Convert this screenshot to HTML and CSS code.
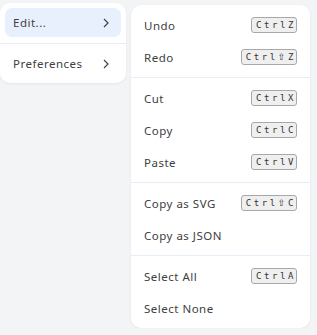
FILE: index.html
```html
<!DOCTYPE html>
<html lang="en">
<head>
    <meta charset="UTF-8">
    <title>Menu</title>
    <link rel="stylesheet" href="styles.css">
</head>
<body>
    <div class="menus">
        <div class="menu main-menu">
            <div class="menu-item active">
                <span>Edit...</span>
                <svg class="chevron" width="8" height="10" viewBox="0 0 8 10"><polyline points="2,1 6,5 2,9" fill="none" stroke="#444" stroke-width="1.2"/></svg>
            </div>
            <div class="sep"></div>
            <div class="menu-item">
                <span>Preferences</span>
                <svg class="chevron" width="8" height="10" viewBox="0 0 8 10"><polyline points="2,1 6,5 2,9" fill="none" stroke="#444" stroke-width="1.2"/></svg>
            </div>
        </div>

        <div class="menu sub-menu">
            <div class="sub-item"><span>Undo</span><kbd>Ctrl<span class="key">Z</span></kbd></div>
            <div class="sub-item"><span>Redo</span><kbd>Ctrl<span class="shift">⇧</span>Z</kbd></div>
            <div class="sep"></div>
            <div class="sub-item"><span>Cut</span><kbd>Ctrl<span class="key">X</span></kbd></div>
            <div class="sub-item"><span>Copy</span><kbd>Ctrl<span class="key">C</span></kbd></div>
            <div class="sub-item"><span>Paste</span><kbd>Ctrl<span class="key">V</span></kbd></div>
            <div class="sep"></div>
            <div class="sub-item"><span>Copy as SVG</span><kbd>Ctrl<span class="shift">⇧</span>C</kbd></div>
            <div class="sub-item"><span>Copy as JSON</span></div>
            <div class="sep"></div>
            <div class="sub-item"><span>Select All</span><kbd>Ctrl<span class="key">A</span></kbd></div>
            <div class="sub-item"><span>Select None</span></div>
        </div>
    </div>
</body>
</html>
```

FILE: styles.css
```css
* {
    margin: 0;
    padding: 0;
    box-sizing: border-box;
}
body {
    font-family: 'Noto Sans', sans-serif;
    font-size: 11.5px;
    letter-spacing: 0.5px;
    color: #404040;
    background-color: #f3f4f6;
}
.menus {
    display: flex;
    align-items: flex-start;
    gap: 5px;
}
.menu {
    background-color: white;
    border-radius: 10px;
    box-shadow: 0 1px 3px rgba(0, 0, 0, 0.06);
}
.main-menu {
    width: 126px;
    margin-top: 3px;
    padding: 5px;
}
.menu-item {
    display: flex;
    align-items: center;
    justify-content: space-between;
    height: 29px;
    padding: 0 11px 0 8px;
    border-radius: 7px;
}
.menu-item.active {
    background-color: #e9f0fd;
}
.main-menu .sep {
    margin: 6px -5px 5px;
}
.sep {
    height: 1px;
    background-color: #e5edf7;
}
.sub-menu {
    width: 179px;
    margin-top: 5px;
    padding: 4px 0;
}
.sub-item {
    display: flex;
    align-items: center;
    justify-content: space-between;
    height: 32px;
    padding: 0 13px 0 13px;
}
.sub-menu .sep {
    margin: 4px 0;
}
kbd {
    font-family: 'DejaVu Sans Mono', monospace;
    font-size: 9px;
    letter-spacing: 2.6px;
    color: #333;
    background-color: #efefef;
    border: 1px solid #a8a8a8;
    border-radius: 3px;
    padding: 1px 0 1px 4px;
    line-height: 12px;
}
.shift {
    font-family: 'DejaVu Sans', sans-serif;
    font-size: 9px;
}
```
